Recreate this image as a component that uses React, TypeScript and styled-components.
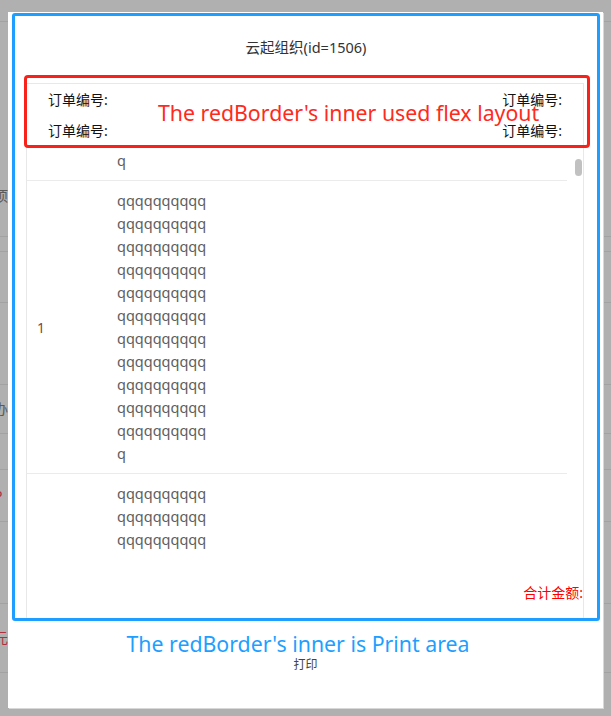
import React, { useLayoutEffect, useRef } from "react";
import styled, { createGlobalStyle } from "styled-components";

const GlobalStyle = createGlobalStyle`
  html, body { margin: 0; padding: 0; }
  body {
    width: 611px;
    height: 716px;
    overflow: hidden;
    background: #b0b0b0;
    font-family: "Noto Sans", "Noto Sans CJK SC", sans-serif;
  }
  * { box-sizing: border-box; }
`;

/* ---------- dimmed page behind the dialog ---------- */
const Backdrop = styled.div`
  position: fixed;
  inset: 0;
  display: flex;
  flex-direction: column;
  background: #b0b0b0;
`;

const PageRow = styled.div<{ $h: number; $line?: boolean }>`
  flex: 0 0 ${(p) => p.$h}px;
  display: flex;
  align-items: center;
  border-bottom: ${(p) => (p.$line ? "1px solid #a2a2a2" : "none")};
`;

const PageLabel = styled.span<{ $red?: boolean }>`
  font-size: 14px;
  line-height: 20px;
  margin-left: -6px;
  color: ${(p) => (p.$red ? "#b0303e" : "#5a5a5a")};
`;

/* ---------- dialog ---------- */
const Modal = styled.div`
  position: fixed;
  left: 8px;
  top: 12px;
  width: 595px;
  height: 696px;
  background: #fff;
  box-shadow: 1px 1px 0 #d8d8d8;
  display: flex;
  flex-direction: column;
  align-items: flex-start;
`;

const PrintArea = styled.div`
  position: relative;
  margin: 1px 0 0 4px;
  width: 588px;
  height: 608px;
  border: 3px solid #1e9fff;
  border-radius: 3px;
  overflow: hidden;
  display: flex;
  flex-direction: column;
`;

const Title = styled.div`
  padding-top: 21px;
  margin-bottom: 26px;
  line-height: 20px;
  text-align: center;
  font-size: 14.5px;
  color: #333;
`;

const ContentBox = styled.div`
  margin: 0 13px 0 11px;
  flex: 1;
  border: 1px solid #e8e8e8;
  border-bottom: none;
  display: flex;
  flex-direction: column;
`;

const InfoHeader = styled.div`
  padding: 6px 21px 0 21px;
  display: flex;
  flex-direction: column;
  gap: 11px;
`;

const InfoRow = styled.div`
  display: flex;
  justify-content: space-between;
  font-size: 14px;
  line-height: 20px;
  color: #111;
`;

const TableArea = styled.div`
  margin-top: 9px;
  height: 406px;
  display: flex;
`;

const TableScroll = styled.div`
  flex: 1;
  overflow: hidden;
  padding-right: 8px;
`;

const TableRow = styled.div`
  display: flex;
  border-bottom: 1px solid #ebebeb;
`;

const IndexCell = styled.div`
  flex: 0 0 80px;
  padding-left: 10px;
  display: flex;
  align-items: center;
  font-size: 14px;
  color: #8a3f36;
`;

const TextCell = styled.div`
  padding: 8px 0 8px 10px;
  font-size: 14.5px;
  line-height: 23px;
  color: #5e5e5e;
`;

const ScrollTrack = styled.div`
  flex: 0 0 8px;
  padding-top: 9px;
`;

const ScrollThumb = styled.div`
  width: 7px;
  height: 17px;
  border-radius: 4px;
  background: #c1c1c1;
`;

const Total = styled.div`
  margin-top: 27px;
  text-align: right;
  font-size: 14px;
  line-height: 20px;
  color: #f00;
`;

const RedNote = styled.div`
  position: absolute;
  left: 9px;
  top: 59px;
  width: 566px;
  height: 73px;
  border: 3px solid #f8221a;
  border-radius: 4px;
  display: flex;
  align-items: center;
  padding: 3px 0 0 131px;
  font-size: 21.3px;
  line-height: 26px;
  color: #ff2a1c;
  white-space: nowrap;
`;

const BlueCaption = styled.div`
  align-self: stretch;
  margin-top: 10px;
  padding-right: 15px;
  text-align: center;
  font-size: 21.3px;
  line-height: 26px;
  color: #1e9fff;
`;

const PrintLabel = styled.div`
  align-self: stretch;
  text-align: center;
  font-size: 12px;
  line-height: 16px;
  color: #444;
`;

const pageRows: { h: number; line?: boolean; label?: string; red?: boolean }[] = [
  { h: 22, line: true },
  { h: 133 },
  { h: 82, line: true, label: "项" },
  { h: 15, line: true },
  { h: 51, line: true },
  { h: 82, line: true },
  { h: 49, line: true, label: "办" },
  { h: 36, line: true },
  { h: 52, line: true, label: "P", red: true },
  { h: 82, line: true },
  { h: 69, line: true, label: "元", red: true },
  { h: 43 },
];

const Q10 = "qqqqqqqqqq";
const rows: { index: string; lines: string[] }[] = [
  { index: "", lines: [...Array(11).fill(Q10), "q"] },
  { index: "1", lines: [...Array(11).fill(Q10), "q"] },
  { index: "", lines: Array(4).fill(Q10) },
];

export default function App() {
  const scrollRef = useRef<HTMLDivElement>(null);
  const firstRowRef = useRef<HTMLDivElement>(null);

  useLayoutEffect(() => {
    if (scrollRef.current && firstRowRef.current) {
      scrollRef.current.scrollTop = firstRowRef.current.offsetHeight - 31;
    }
  }, []);

  return (
    <>
      <GlobalStyle />
      <Backdrop>
        {pageRows.map((r, i) => (
          <PageRow key={i} $h={r.h} $line={r.line}>
            {r.label && <PageLabel $red={r.red}>{r.label}</PageLabel>}
          </PageRow>
        ))}
      </Backdrop>
      <Modal>
        <PrintArea>
          <Title>云起组织(id=1506)</Title>
          <ContentBox>
            <InfoHeader>
              <InfoRow>
                <span>订单编号:</span>
                <span>订单编号:</span>
              </InfoRow>
              <InfoRow>
                <span>订单编号:</span>
                <span>订单编号:</span>
              </InfoRow>
            </InfoHeader>
            <TableArea>
              <TableScroll ref={scrollRef}>
                {rows.map((r, i) => (
                  <TableRow key={i} ref={i === 0 ? firstRowRef : undefined}>
                    <IndexCell>{r.index}</IndexCell>
                    <TextCell>
                      {r.lines.map((l, j) => (
                        <div key={j}>{l}</div>
                      ))}
                    </TextCell>
                  </TableRow>
                ))}
              </TableScroll>
              <ScrollTrack>
                <ScrollThumb />
              </ScrollTrack>
            </TableArea>
            <Total>合计金额:</Total>
          </ContentBox>
          <RedNote>The redBorder's inner used flex layout</RedNote>
        </PrintArea>
        <BlueCaption>The redBorder's inner is Print area</BlueCaption>
        <PrintLabel>打印</PrintLabel>
      </Modal>
    </>
  );
}
